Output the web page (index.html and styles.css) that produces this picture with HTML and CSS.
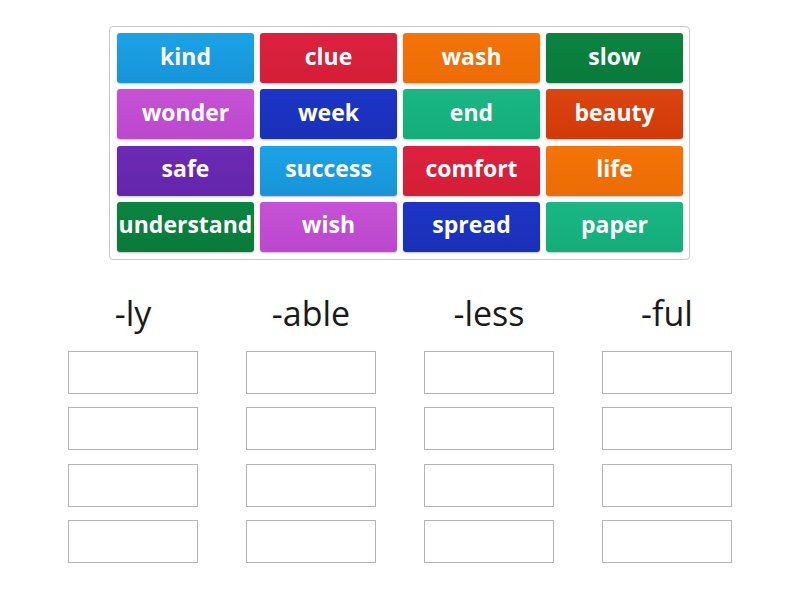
FILE: index.html
```html
<!DOCTYPE html>
<html>
<head>
<meta charset="utf-8">
<link rel="stylesheet" href="styles.css">
</head>
<body>
<div class="bank">
  <div class="tile c-blue">kind</div>
  <div class="tile c-red">clue</div>
  <div class="tile c-orange">wash</div>
  <div class="tile c-green">slow</div>
  <div class="tile c-pink">wonder</div>
  <div class="tile c-navy">week</div>
  <div class="tile c-teal">end</div>
  <div class="tile c-rust">beauty</div>
  <div class="tile c-purple">safe</div>
  <div class="tile c-blue">success</div>
  <div class="tile c-red">comfort</div>
  <div class="tile c-orange">life</div>
  <div class="tile c-green">understand</div>
  <div class="tile c-pink">wish</div>
  <div class="tile c-navy">spread</div>
  <div class="tile c-teal">paper</div>
</div>
<div class="groups">
  <div class="group">
    <div class="title">-ly</div>
    <div class="slot"></div><div class="slot"></div><div class="slot"></div><div class="slot"></div>
  </div>
  <div class="group">
    <div class="title">-able</div>
    <div class="slot"></div><div class="slot"></div><div class="slot"></div><div class="slot"></div>
  </div>
  <div class="group">
    <div class="title">-less</div>
    <div class="slot"></div><div class="slot"></div><div class="slot"></div><div class="slot"></div>
  </div>
  <div class="group">
    <div class="title">-ful</div>
    <div class="slot"></div><div class="slot"></div><div class="slot"></div><div class="slot"></div>
  </div>
</div>
</body>
</html>
```
FILE: styles.css
```css
html, body {
  margin: 0;
  padding: 0;
  background: #fff;
  font-family: "Open Sans", "Noto Sans", sans-serif;
}
.bank {
  box-sizing: border-box;
  width: 581px;
  margin: 26px 0 0 109px;
  padding: 6px 6px 7px 7px;
  border: 1px solid #c8c8c8;
  border-radius: 4px;
  display: grid;
  grid-template-columns: repeat(4, 137px);
  grid-auto-rows: 50px;
  column-gap: 6px;
  row-gap: 6.33px;
}
.tile {
  display: flex;
  align-items: center;
  justify-content: center;
  border-radius: 3px;
  color: #fff;
  font-weight: 700;
  font-size: 23px;
  box-shadow: 0 1px 2px rgba(0,0,0,0.25);
  white-space: nowrap;
  padding-bottom: 5px;
  box-sizing: border-box;
}
.c-blue { background: linear-gradient(#1ba3e6, #1894d8); }
.c-red { background: linear-gradient(#dc2140, #d31f36); }
.c-orange { background: linear-gradient(#f47408, #ec6c06); }
.c-green { background: linear-gradient(#0b8440, #097a3a); }
.c-pink { background: linear-gradient(#c653d6, #bb48cc); }
.c-navy { background: linear-gradient(#1d35c6, #1930b8); }
.c-teal { background: linear-gradient(#19b784, #14ad7a); }
.c-rust { background: linear-gradient(#dc4410, #d13a08); }
.c-purple { background: linear-gradient(#6d2ab6, #6226ab); }
.groups {
  display: flex;
  justify-content: center;
  gap: 48px;
  margin-top: 34px;
}
.group {
  width: 130px;
  display: flex;
  flex-direction: column;
  gap: 13.33px;
}
.title {
  font-size: 34px;
  line-height: 38px;
  height: 38px;
  text-align: center;
  color: #1a1a1a;
  margin-bottom: 5.67px;
}
.slot {
  box-sizing: border-box;
  height: 43px;
  border: 1px solid #b4b4b4;
  background: #fff;
}
```
